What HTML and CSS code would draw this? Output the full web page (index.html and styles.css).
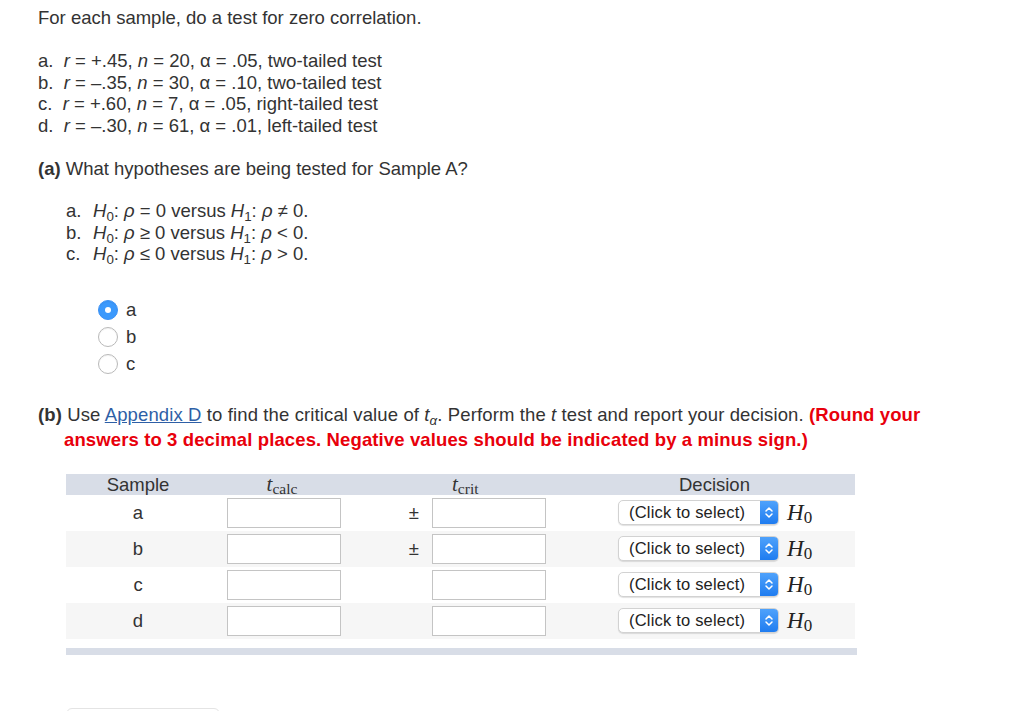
FILE: index.html
```html
<!DOCTYPE html>
<html>
<head>
<meta charset="utf-8">
<link rel="stylesheet" href="styles.css">
</head>
<body>
<div class="page">
  <p class="intro">For each sample, do a test for zero correlation.</p>
  <div class="samples">
    <div>a.&nbsp; <i>r</i> = +.45, <i>n</i> = 20, α = .05, two-tailed test</div>
    <div>b.&nbsp; <i>r</i> = –.35, <i>n</i> = 30, α = .10, two-tailed test</div>
    <div>c.&nbsp; <i>r</i> = +.60, <i>n</i> = 7, α = .05, right-tailed test</div>
    <div>d.&nbsp; <i>r</i> = –.30, <i>n</i> = 61, α = .01, left-tailed test</div>
  </div>

  <p class="part"><b class="tag">(a)</b> What hypotheses are being tested for Sample A?</p>
  <div class="hyps">
    <div><span class="lbl">a.</span><i>H</i><sub>0</sub>: <i>ρ</i> = 0 versus <i>H</i><sub>1</sub>: <i>ρ</i> ≠ 0.</div>
    <div><span class="lbl">b.</span><i>H</i><sub>0</sub>: <i>ρ</i> ≥ 0 versus <i>H</i><sub>1</sub>: <i>ρ</i> &lt; 0.</div>
    <div><span class="lbl">c.</span><i>H</i><sub>0</sub>: <i>ρ</i> ≤ 0 versus <i>H</i><sub>1</sub>: <i>ρ</i> &gt; 0.</div>
  </div>

  <div class="radios">
    <div class="radio-row"><span class="radio checked"></span><span class="rlabel">a</span></div>
    <div class="radio-row"><span class="radio"></span><span class="rlabel">b</span></div>
    <div class="radio-row"><span class="radio"></span><span class="rlabel">c</span></div>
  </div>

  <p class="part partb"><b class="tag">(b)</b> Use <a class="link" href="#">Appendix D</a> to find the critical value of <i>t</i><sub class="isub">α</sub>. Perform the <i>t</i> test and report your decision. <b class="red">(Round your</b> <b class="red">answers to 3 decimal places. Negative values should be indicated by a minus sign.)</b></p>

  <div class="table">
    <div class="thead">
      <div class="h-sample">Sample</div>
      <div class="h-calc"><span class="mt">t</span><span class="msub">calc</span></div>
      <div class="h-pm"></div>
      <div class="h-crit"><span class="mt">t</span><span class="msub">crit</span></div>
      <div class="h-dec">Decision</div>
    </div>
    <div class="trow">
      <div class="c-sample">a</div>
      <div class="c-calc"><span class="inp"></span></div>
      <div class="c-pm">±</div>
      <div class="c-crit"><span class="inp"></span></div>
      <div class="c-dec"><span class="sel"><span class="sel-text">(Click to select)</span><span class="sel-arrow"><svg width="10" height="13" viewBox="0 0 10 13"><path d="M2 5 L5 2 L8 5 M2 8 L5 11 L8 8" fill="none" stroke="#fff" stroke-width="1.5" stroke-linecap="round" stroke-linejoin="round"/></svg></span></span><span class="h0"><i>H</i><sub>0</sub></span></div>
    </div>
    <div class="trow alt">
      <div class="c-sample">b</div>
      <div class="c-calc"><span class="inp"></span></div>
      <div class="c-pm">±</div>
      <div class="c-crit"><span class="inp"></span></div>
      <div class="c-dec"><span class="sel"><span class="sel-text">(Click to select)</span><span class="sel-arrow"><svg width="10" height="13" viewBox="0 0 10 13"><path d="M2 5 L5 2 L8 5 M2 8 L5 11 L8 8" fill="none" stroke="#fff" stroke-width="1.5" stroke-linecap="round" stroke-linejoin="round"/></svg></span></span><span class="h0"><i>H</i><sub>0</sub></span></div>
    </div>
    <div class="trow">
      <div class="c-sample">c</div>
      <div class="c-calc"><span class="inp"></span></div>
      <div class="c-pm"></div>
      <div class="c-crit"><span class="inp"></span></div>
      <div class="c-dec"><span class="sel"><span class="sel-text">(Click to select)</span><span class="sel-arrow"><svg width="10" height="13" viewBox="0 0 10 13"><path d="M2 5 L5 2 L8 5 M2 8 L5 11 L8 8" fill="none" stroke="#fff" stroke-width="1.5" stroke-linecap="round" stroke-linejoin="round"/></svg></span></span><span class="h0"><i>H</i><sub>0</sub></span></div>
    </div>
    <div class="trow alt">
      <div class="c-sample">d</div>
      <div class="c-calc"><span class="inp"></span></div>
      <div class="c-pm"></div>
      <div class="c-crit"><span class="inp"></span></div>
      <div class="c-dec"><span class="sel"><span class="sel-text">(Click to select)</span><span class="sel-arrow"><svg width="10" height="13" viewBox="0 0 10 13"><path d="M2 5 L5 2 L8 5 M2 8 L5 11 L8 8" fill="none" stroke="#fff" stroke-width="1.5" stroke-linecap="round" stroke-linejoin="round"/></svg></span></span><span class="h0"><i>H</i><sub>0</sub></span></div>
    </div>
  </div>
  <div class="bottom-bar"></div>
  <div class="bottom-box"></div>
</div>
</body>
</html>
```

FILE: styles.css
```css
html, body {
  margin: 0;
  padding: 0;
  background: #fff;
}
body {
  font-family: "Liberation Sans", Arial, sans-serif;
  font-size: 18.5px;
  color: #333;
}
.page {
  padding: 8px 0 0 38px;
  overflow: hidden;
}
p { margin: 0; }
.intro { line-height: 20px; }
.samples {
  margin-top: 22px;
  line-height: 21.5px;
}
.part {
  margin-top: 23px;
  line-height: 20px;
}
.tag { color: #333; }
sub {
  font-size: 72%;
  line-height: 0;
  vertical-align: -0.3em;
}
.hyps {
  margin-top: 21px;
  padding-left: 28px;
  line-height: 21.5px;
}
.lbl {
  display: inline-block;
  width: 27px;
}
.radios {
  margin-top: 32px;
  padding-left: 60px;
}
.radio-row {
  height: 27px;
  display: flex;
  align-items: center;
}
.radio {
  width: 18px;
  height: 18px;
  border-radius: 50%;
  border: 1px solid #b9b9b9;
  background: #fff;
  box-shadow: inset 0 1px 1px rgba(0,0,0,0.05);
  display: flex;
  align-items: center;
  justify-content: center;
}
.radio.checked {
  border-color: #3d92f5;
  background: #3b99fc;
}
.radio.checked::after {
  content: "";
  width: 6px;
  height: 6px;
  border-radius: 50%;
  background: #fff;
}
.rlabel { margin-left: 8px; }
.partb {
  margin-top: 24px;
  line-height: 25px;
  padding-left: 26px;
  text-indent: -26px;
  width: 910px;
  letter-spacing: 0.12px;
}
.link {
  color: #2e5fa6;
  text-decoration: underline;
}
.isub { font-style: italic; }
.red { color: #e8000b; }

.table {
  margin: 22px 0 0 28px;
  width: 789px;
}
.thead, .trow {
  display: grid;
  grid-template-columns: 144px 148px 74px 168px 255px;
  align-items: center;
}
.thead {
  height: 21px;
  background: #d8dde7;
  line-height: 21px;
}
.h-sample { text-align: center; }
.h-calc { text-align: center; padding-right: 4px; }
.h-crit { padding-left: 20px; }
.h-dec { padding-left: 79px; }
.mt {
  font-family: "Liberation Serif", "Times New Roman", serif;
  font-style: italic;
  font-size: 21px;
}
.msub {
  font-family: "Liberation Serif", "Times New Roman", serif;
  font-size: 15.5px;
  vertical-align: -3px;
  line-height: 0;
}
.trow {
  height: 36px;
  background: #fff;
}
.trow.alt { background: #f6f6f6; }
.c-sample { text-align: center; }
.c-calc { padding-left: 17px; display: flex; }
.c-crit { display: flex; }
.c-pm {
  text-align: right;
  padding-right: 13px;
}
.inp {
  display: block;
  width: 112px;
  height: 28px;
  border: 1px solid #c4c4c4;
  background: #fff;
}
.c-dec {
  display: flex;
  align-items: center;
  padding-left: 18px;
}
.sel {
  display: flex;
  align-items: stretch;
  width: 161px;
  height: 25px;
  box-sizing: border-box;
  border-radius: 5px;
  background: #fff;
  border: 1px solid #d2d2d2;
  box-shadow: 0 1px 1px rgba(0,0,0,0.12);
  overflow: hidden;
}
.sel-text {
  flex: 1;
  font-size: 16.5px;
  line-height: 23px;
  padding-left: 10px;
  color: #222;
  white-space: nowrap;
  letter-spacing: 0.2px;
}
.sel-arrow {
  width: 18px;
  flex: none;
  background: linear-gradient(#4fa2fb, #1f7cf0);
  display: flex;
  align-items: center;
  justify-content: center;
}
.h0 {
  margin-left: 8px;
  font-family: "Liberation Serif", "Times New Roman", serif;
  font-size: 23px;
  color: #222;
}
.h0 sub {
  font-style: normal;
  font-size: 17px;
  vertical-align: -3px;
}
.bottom-bar {
  margin: 9px 0 0 28px;
  width: 791px;
  height: 7px;
  background: #d8dde7;
}
.bottom-box {
  margin: 53px 0 0 28px;
  width: 152px;
  height: 30px;
  border: 1px solid #e4e4e4;
  border-radius: 6px;
}
```
